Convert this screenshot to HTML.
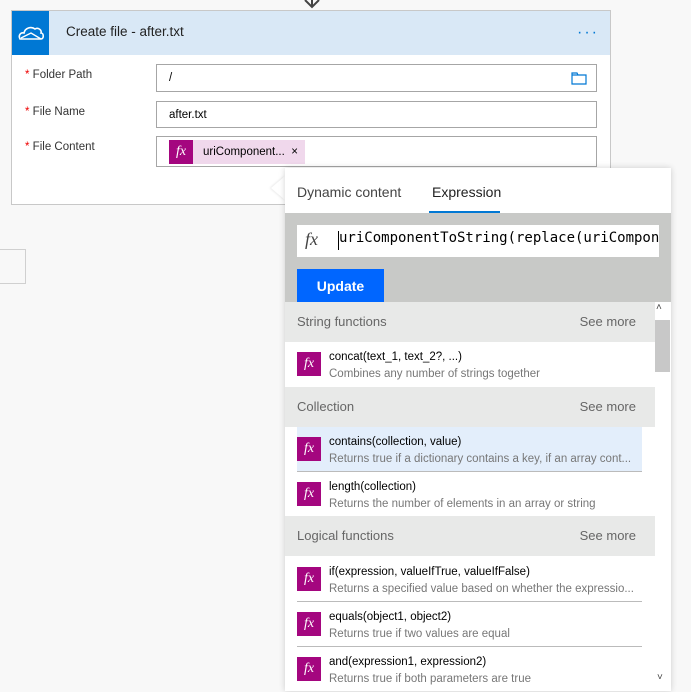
<!DOCTYPE html>
<html><head><style>
*{box-sizing:border-box;margin:0;padding:0}
body{width:691px;height:691px;overflow:hidden;background:#f8f8f8;font-family:"Segoe UI","Liberation Sans",sans-serif;position:relative;color:#333}
.abs{position:absolute}
.card{left:11px;top:10px;width:600px;height:195px;background:#fff;border:1px solid #c8c8c8}
.hdr{left:0;top:0;width:598px;height:44px;background:#d9e8f6}
.ico{left:0;top:0;width:37px;height:44px;background:#0078d4}
.lbl{font-size:11.5px;color:#333}
.lbl b{color:#e00;font-weight:normal}
.inp{left:144px;width:441px;border:1px solid #a6a6a6;background:#fff;font-size:11.5px;color:#000;padding-left:12px}
.fx{display:inline-block;width:24px;height:24px;background:#a4067f;color:#fff;font-family:"Liberation Serif",serif;font-style:italic;font-size:14px;text-align:center;line-height:23px}
.panel{left:285px;top:168px;width:386px;height:523px;background:#fff;box-shadow:0 0 6px rgba(0,0,0,.18)}
.sec{left:0;width:370px;height:40px;background:#e8e9e8;font-size:13px;color:#666;padding:12px 12px 0}
.sec span{position:absolute;right:19px;top:12px}
.row{left:12px;width:345px;height:45px}
.row .fx{position:absolute;left:0;top:10px}
.row .t{position:absolute;left:32px;top:9px;font-size:11.5px;color:#000;white-space:nowrap}
.row .d{position:absolute;left:32px;top:26px;font-size:11.5px;color:#777;white-space:nowrap}
.sep{border-bottom:1px solid #bbb}
</style></head><body>
<svg class="abs" style="left:302px;top:0" width="20" height="10"><path d="M3 0 L10 7 L17 0" fill="none" stroke="#444" stroke-width="2"/><line x1="10" y1="0" x2="10" y2="7" stroke="#444" stroke-width="2"/></svg>
<div class="abs" style="left:-2px;top:249px;width:28px;height:35px;border:1px solid #d0d0d0"></div>
<div class="abs card">
 <div class="abs hdr"></div>
 <div class="abs ico"><svg width="37" height="44"><path d="M8 28 C6 24 9 21 12 22 C13 17 19 15 23 18 C26 16 30 19 29 22 C32 22 32 28 29 28 Z" fill="none" stroke="#fff" stroke-width="1.6"/><path d="M9 27 L19 22 L29 28" fill="none" stroke="#fff" stroke-width="1.4"/></svg></div>
 <div class="abs" style="left:54px;top:13px;font-size:13.5px;color:#222">Create file - after.txt</div>
 <div class="abs" style="left:565px;top:13px;font-size:16px;color:#0078d4;letter-spacing:2px">···</div>
 <div class="abs lbl" style="left:13px;top:58px"><b>*</b> Folder Path</div>
 <div class="abs lbl" style="left:13px;top:95px"><b>*</b> File Name</div>
 <div class="abs lbl" style="left:13px;top:130px"><b>*</b> File Content</div>
 <div class="abs inp" style="top:53px;height:28px;line-height:26px">/<svg class="abs" style="right:9px;top:6px" width="16" height="14"><path d="M1 2 H6 L7 4 H15 V13 H1 Z M1 4 H15" fill="none" stroke="#0078d4" stroke-width="1.2"/></svg></div>
 <div class="abs inp" style="top:90px;height:27px;line-height:26px">after.txt</div>
 <div class="abs inp" style="top:125px;height:31px;padding-left:12px;padding-top:3px"><span style="display:inline-flex;background:#f0d8ec;height:24px;align-items:center"><span class="fx">fx</span><span style="padding:0 7px 0 10px;font-size:11.5px">uriComponent...&nbsp;&nbsp;×</span></span></div>
</div>
<div class="abs" style="left:271px;top:176px;width:0;height:0;border-top:12px solid transparent;border-bottom:12px solid transparent;border-right:14px solid #fff;filter:drop-shadow(-1px 0 1px rgba(0,0,0,.1))"></div>
<div class="abs panel">
 <div class="abs" style="left:12px;top:16px;font-size:14px;color:#444">Dynamic content</div>
 <div class="abs" style="left:147px;top:16px;font-size:14px;color:#222">Expression</div>
 <div class="abs" style="left:144px;top:43px;width:71px;height:2px;background:#0078d4"></div>
 <div class="abs" style="left:0;top:45px;width:386px;height:89px;background:#c8c9c7"></div>
 <div class="abs" style="left:12px;top:57px;width:362px;height:32px;background:#fff;overflow:hidden;white-space:nowrap">
  <span class="abs" style="left:8px;top:4px;font-family:'Liberation Serif',serif;font-style:italic;font-size:18px;color:#444">fx</span>
  <span class="abs" style="left:41px;top:6px;width:1px;height:19px;background:#000"></span>
  <span class="abs" style="left:42px;top:5px;font-family:'DejaVu Sans Mono','Liberation Mono',monospace;font-size:14px;color:#000">uriComponentToString(replace(uriComponentToString</span>
 </div>
 <div class="abs" style="left:12px;top:101px;width:87px;height:33px;background:#0066ff;color:#fff;font-size:14px;font-weight:bold;text-align:center;line-height:34px">Update</div>
 <div class="abs" style="left:370px;top:134px;width:16px;height:389px;background:#fff"></div>
 <div class="abs" style="left:371px;top:134px;font-size:10px;color:#444">&#708;</div>
 <div class="abs" style="left:370px;top:152px;width:15px;height:52px;background:#c8c8c8"></div>
 <div class="abs" style="left:372px;top:504px;font-size:10px;color:#444">&#709;</div>
 <div class="abs sec" style="top:134px">String functions<span>See more</span></div>
 <div class="abs row" style="top:174px"><span class="fx">fx</span><div class="t">concat(text_1, text_2?, ...)</div><div class="d">Combines any number of strings together</div></div>
 <div class="abs sec" style="top:219px">Collection<span>See more</span></div>
 <div class="abs row sep" style="top:259px;background:#e3eefb"><span class="fx">fx</span><div class="t">contains(collection, value)</div><div class="d">Returns true if a dictionary contains a key, if an array cont...</div></div>
 <div class="abs row" style="top:304px"><span class="fx">fx</span><div class="t">length(collection)</div><div class="d">Returns the number of elements in an array or string</div></div>
 <div class="abs sec" style="top:348px">Logical functions<span>See more</span></div>
 <div class="abs row sep" style="top:389px"><span class="fx">fx</span><div class="t">if(expression, valueIfTrue, valueIfFalse)</div><div class="d">Returns a specified value based on whether the expressio...</div></div>
 <div class="abs row sep" style="top:434px"><span class="fx">fx</span><div class="t">equals(object1, object2)</div><div class="d">Returns true if two values are equal</div></div>
 <div class="abs row" style="top:479px"><span class="fx">fx</span><div class="t">and(expression1, expression2)</div><div class="d">Returns true if both parameters are true</div></div>
</div>
</body></html>
